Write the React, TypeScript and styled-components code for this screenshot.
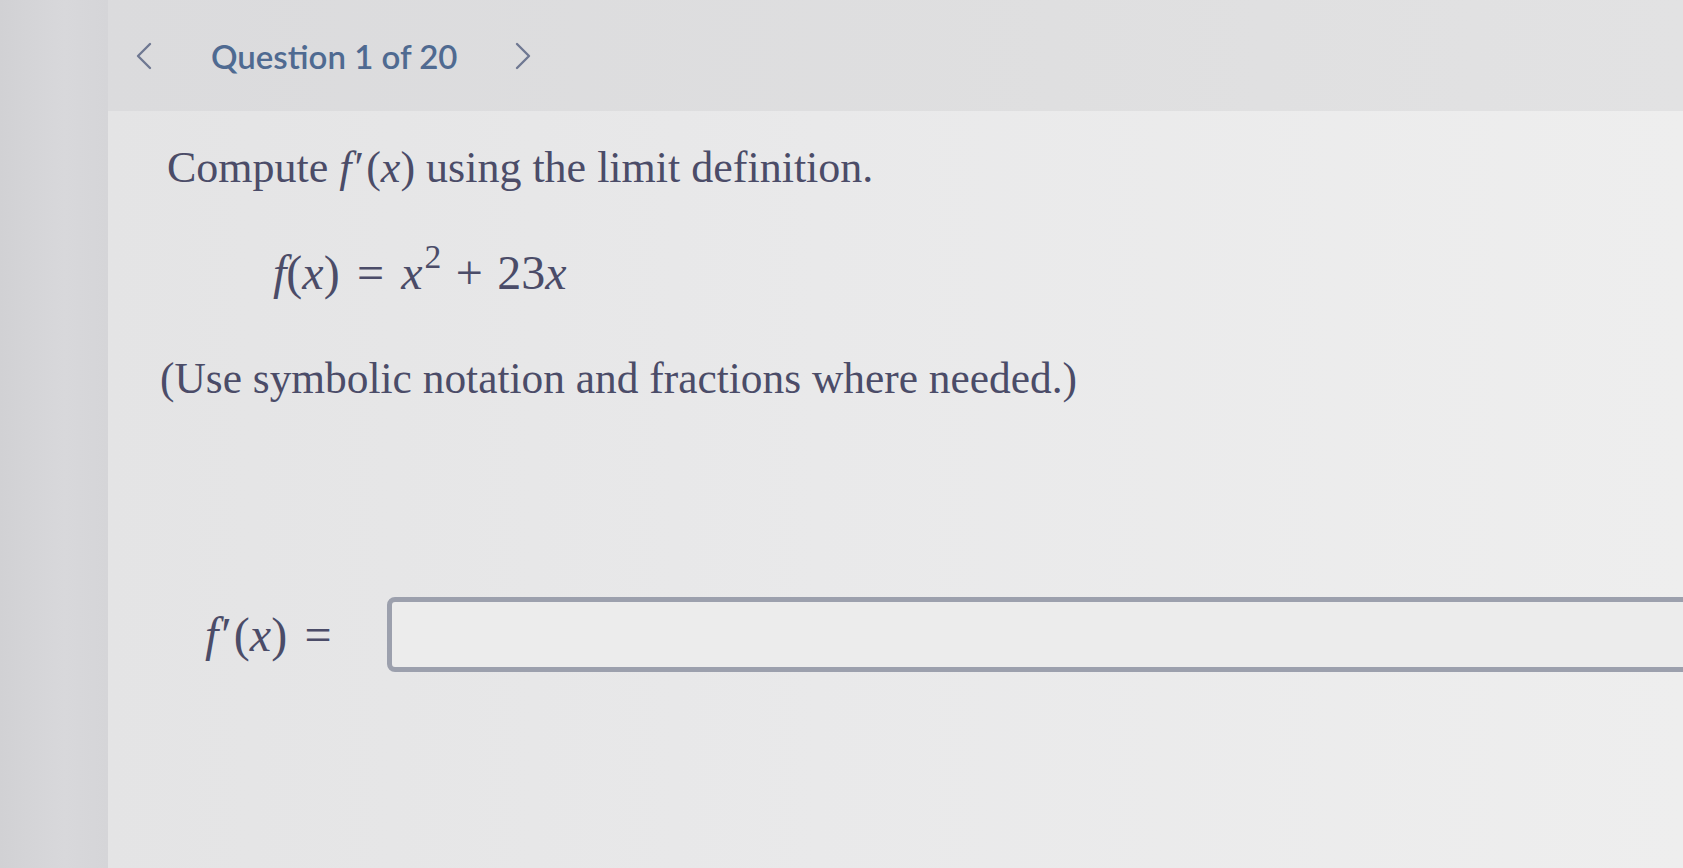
import React from "react"
import styled, { createGlobalStyle } from "styled-components"

const GlobalStyle = createGlobalStyle`
  html, body {
    margin: 0;
    padding: 0;
    height: 100%;
    overflow: hidden;
  }
  body {
    background: #e6e6e7;
  }
  #root {
    height: 100%;
  }
`

const Page = styled.div`
  display: flex;
  height: 100vh;
`

const SideRail = styled.aside`
  width: 108px;
  flex-shrink: 0;
  background: linear-gradient(90deg, #d1d1d4 0%, #d8d8db 60%, #d5d5d8 100%);
`

const Main = styled.main`
  flex: 1;
  min-width: 0;
  display: flex;
  flex-direction: column;
  background: linear-gradient(90deg, #e4e4e5 0%, #e9e9ea 45%, #eeeeee 100%);
`

const TopBar = styled.header`
  height: 111px;
  flex-shrink: 0;
  box-sizing: border-box;
  display: flex;
  align-items: center;
  padding-left: 27px;
  background: linear-gradient(90deg, #dbdbdd 0%, #dfdfe0 60%, #e2e2e3 100%);
`

const NavButton = styled.button`
  display: flex;
  align-items: center;
  justify-content: center;
  width: 18px;
  height: 30px;
  padding: 0;
  border: none;
  background: none;
  color: #6f7892;
  cursor: pointer;
`

const QuestionCount = styled.span`
  margin: 0 56px 0 58px;
  font-family: Lato, "Open Sans", sans-serif;
  font-weight: 600;
  font-size: 33px;
  color: #4f6a91;
`

const Content = styled.section`
  padding: 31px 0 0 59px;
  font-family: "Liberation Serif", "Times New Roman", serif;
  font-size: 44px;
  line-height: 52px;
  color: #4b4c68;
`

const Prompt = styled.p`
  margin: 0;
`

const Formula = styled.p`
  margin: 53px 0 0 106px;
  font-size: 48px;
`

const Hint = styled.p`
  margin: 53px 0 0 -7px;
  font-size: 43.4px;
`

const AnswerRow = styled.div`
  display: flex;
  align-items: center;
  margin: 193px 0 0 38px;
`

const AnswerLabel = styled.label`
  white-space: nowrap;
  font-size: 48px;
`

const AnswerBox = styled.input`
  flex: 1;
  height: 75px;
  box-sizing: border-box;
  margin: 0 -40px 0 38px;
  border: 5px solid #9ca0ad;
  border-radius: 8px;
  background: #ececec;
  outline: none;
`

const Var = styled.i`
  font-style: italic;
`

const Rel = styled.span`
  margin: 0 0.36em;
`

const Bin = styled.span`
  margin: 0 0.3em;
`

const Sup = styled.sup`
  font-size: 0.7em;
  line-height: 0;
  vertical-align: 21px;
  margin-left: 2px;
`

const Prime = styled.span`
  margin: 0 2px 0 3px;
`

const Chevron = ({ dir }: { dir: "left" | "right" }) => (
  <svg width="18" height="30" viewBox="0 0 18 30" fill="none">
    <polyline
      points={dir === "left" ? "15,3 3,15 15,27" : "3,3 15,15 3,27"}
      stroke="currentColor"
      strokeWidth="2.4"
      strokeLinecap="round"
      strokeLinejoin="round"
    />
  </svg>
)

const FPrime = () => (
  <>
    <Var>f</Var>
    <Prime>′</Prime>(<Var>x</Var>)
  </>
)

export default function App() {
  return (
    <>
      <GlobalStyle />
      <Page>
        <SideRail />
        <Main>
          <TopBar>
            <NavButton aria-label="Previous question">
              <Chevron dir="left" />
            </NavButton>
            <QuestionCount>Question 1 of 20</QuestionCount>
            <NavButton aria-label="Next question">
              <Chevron dir="right" />
            </NavButton>
          </TopBar>
          <Content>
            <Prompt>
              Compute <FPrime /> using the limit definition.
            </Prompt>
            <Formula>
              <Var>f</Var>(<Var>x</Var>)<Rel>=</Rel>
              <Var>x</Var>
              <Sup>2</Sup>
              <Bin>+</Bin>23<Var>x</Var>
            </Formula>
            <Hint>(Use symbolic notation and fractions where needed.)</Hint>
            <AnswerRow>
              <AnswerLabel htmlFor="answer">
                <FPrime />
                <Rel>=</Rel>
              </AnswerLabel>
              <AnswerBox id="answer" type="text" />
            </AnswerRow>
          </Content>
        </Main>
      </Page>
    </>
  )
}
